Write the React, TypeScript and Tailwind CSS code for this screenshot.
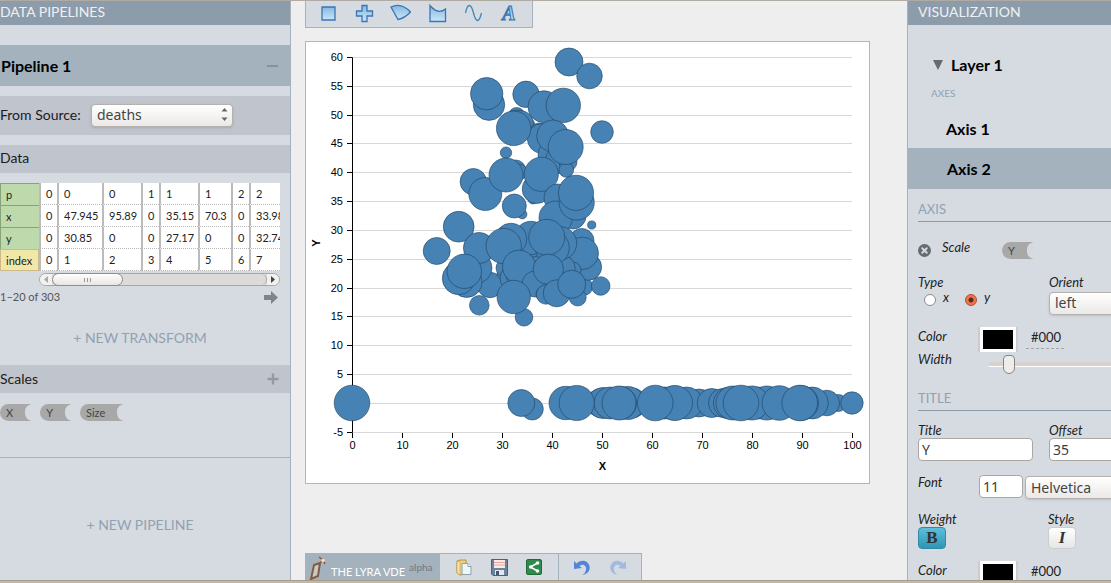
import React, { useState } from 'react';
import { X } from 'lucide-react';

type Point = [number, number, number];

const columns = [
  { width: 'w-[18px]', p: '0', x: '0', y: '0', index: '0' },
  { width: 'w-[45px]', p: '0', x: '47.945', y: '30.85', index: '1' },
  { width: 'w-[39px]', p: '0', x: '95.89', y: '0', index: '2' },
  { width: 'w-[18px]', p: '1', x: '0', y: '0', index: '3' },
  { width: 'w-[39px]', p: '1', x: '35.15', y: '27.17', index: '4' },
  { width: 'w-[33px]', p: '1', x: '70.3', y: '0', index: '5' },
  { width: 'w-[18px]', p: '2', x: '0', y: '0', index: '6' },
  { width: 'w-[45px]', p: '2', x: '33.985', y: '32.745', index: '7' },
];

const fields = ['p', 'x', 'y', 'index'] as const;

// cx, cy, r in drawing order
const points: Point[] = [
  [263, 20, 14], [283.5, 34, 12.8],
  [183, 62.7, 15.7], [180.7, 51.7, 16.2],
  [220, 52.3, 13.2], [210.7, 73.5, 8], [223, 82, 5.5], [211, 83, 15], [214, 82, 13.5],
  [233, 90, 9], [236.3, 96.5, 15], [238, 64.7, 16], [257.3, 63.4, 17.2],
  [207.7, 86.3, 17.3], [296, 90, 11.3], [247, 113, 15], [253, 118, 13.5], [262, 120, 9], [260.3, 128, 7.3],
  [246.7, 94, 16], [259.7, 105, 17.5], [200, 110.7, 5.7],
  [209.7, 128, 10], [213, 130, 8], [167.3, 139.7, 13.2], [179.3, 152, 16.5], [200, 133, 17],
  [227, 157, 5], [230.7, 147, 14.5], [235.3, 132.3, 17.1],
  [216.3, 172.3, 4.6], [208.3, 164, 12],
  [252, 156, 14], [267, 174, 13], [249.7, 175.7, 16.7], [270.7, 160.5, 17.6], [270, 150.8, 17.6],
  [285.7, 183, 4.1], [152.7, 184.7, 15.4], [130.7, 209, 13.5],
  [184, 243, 12.7], [170.7, 226, 15.3], [173, 206, 15.6], [160.7, 240, 15.4], [152.7, 236.3, 16.4], [158.3, 229.3, 17.2],
  [173.3, 263.3, 9.8],
  [196, 232, 5], [199, 226, 9], [207, 236, 13], [217, 232, 17], [224, 218, 6],
  [222, 209, 8], [223, 212, 5], [226, 214, 9],
  [225, 196, 16.7], [205, 197, 15.8], [197.7, 204, 17.7],
  [232, 228, 14], [213, 224.7, 16.5],
  [275.7, 198.7, 12.3], [278, 244.7, 8.7], [282.3, 225, 13.3], [276.3, 211.3, 16.2], [294.7, 244, 9.3],
  [267, 228, 8], [255.7, 226.3, 13.5],
  [254, 201.3, 16.7], [246.3, 205.7, 17], [240.7, 195.3, 18],
  [229, 242, 13], [242.3, 227.3, 15.2],
  [237, 252, 7], [240, 252.5, 9.7], [271.7, 255.5, 8.5],
  [250.7, 251.3, 13.5], [265.7, 242.3, 14],
  [218, 275.3, 8.8], [207.7, 255, 16.7],
  [226.3, 367, 11], [215.3, 361, 13.5],
  [259.7, 361, 16.7], [294, 361, 14], [297, 361, 15.5], [304, 361, 16], [326, 361, 15], [322, 361, 16.5],
  [314, 361, 16.5], [270.7, 361, 17.6], [313, 361, 17], [359, 361, 16], [393, 361, 14], [380.7, 361, 16],
  [368, 361, 17], [369, 361, 17.5], [349.3, 361, 17.8], [405.7, 361, 14.5], [417, 361, 14.5],
  [423.3, 361, 16], [427, 361, 17], [452, 361, 16], [460.7, 361, 17], [446, 361, 17],
  [435, 361, 17.8], [532.3, 361, 8.5], [520.7, 361, 12.8], [506.3, 361, 16],
  [495, 361, 17.5], [473.3, 361, 17.3], [493.7, 361, 17.8], [546, 361, 11.2], [46, 361, 17.8],
];

const yTicks = [60, 55, 50, 45, 40, 35, 30, 25, 20, 15, 10, 5, -5];
const gridLines = [...yTicks, 0];
const xTicks = [0, 10, 20, 30, 40, 50, 60, 70, 80, 90, 100];

const yPos = (v: number) => Math.round(361 - v * 5.77) + 0.5;
const xPos = (v: number) => 46.5 + v * 5;

const Chart: React.FC = () => (
  <svg width="563" height="441" viewBox="0 0 563 441" className="block" fontFamily='"Liberation Sans", Arial, sans-serif' fontSize="11">
    {gridLines.map((v) => (
      <line key={v} x1="47" x2="546" y1={yPos(v)} y2={yPos(v)} stroke="#d8d8d8" />
    ))}
    <path d={`M41 ${yPos(60)}H46.5V${yPos(-5)}H41`} fill="none" stroke="#000" />
    {yTicks.map((v) => (
      <g key={v}>
        <line x1="41" x2="46" y1={yPos(v)} y2={yPos(v)} stroke="#000" />
        <text x="37" y={yPos(v) + 3} textAnchor="end">{v}</text>
      </g>
    ))}
    {xTicks.map((v) => (
      <g key={v}>
        <line x1={xPos(v)} x2={xPos(v)} y1="391" y2="396" stroke="#000" />
        <text x={xPos(v)} y="407" textAnchor="middle">{v}</text>
      </g>
    ))}
    {points.map(([cx, cy, r], i) => (
      <circle key={i} cx={cx} cy={cy} r={r} fill="#4682b4" stroke="#1f425f" strokeWidth="0.6" />
    ))}
    <text x="296.5" y="428" textAnchor="middle" fontWeight="bold">X</text>
    <text transform="translate(14 201) rotate(-90)" textAnchor="middle" fontWeight="bold">Y</text>
  </svg>
);

const ScaleChip: React.FC<{ label: string }> = ({ label }) => (
  <button className="relative h-[17px] overflow-hidden rounded-l-full bg-[#a8a8a8] pl-[6px] pr-[18px] text-left text-[11px] leading-[17px] text-[#444]">
    {label}
    <span className="absolute -right-[9px] top-0 h-[17px] w-[15px] rounded-full bg-[#d6dbe2]" />
  </button>
);

const Arrows: React.FC = () => (
  <svg className="pointer-events-none absolute right-[5px] top-[6px]" width="7" height="13" viewBox="0 0 7 13">
    <path d="M0.5 3.5L3.5 0L6.5 3.5ZM0.5 9.5L3.5 13L6.5 9.5Z" fill="#666" />
  </svg>
);

const selectClass =
  'h-[23px] w-full appearance-none rounded border border-[#b5b1ac] bg-gradient-to-b from-white to-[#ebe9e7] pl-[5px] font-["Noto_Sans"] text-[14px] leading-[20px] text-[#444] shadow-sm';
const inputClass =
  'h-[23px] rounded border border-[#aaa6a2] bg-white pl-[3px] font-["Noto_Sans"] text-[14px] leading-[20px] text-[#3c3c3c]';
const labelClass = 'text-[13px] italic leading-[15px] text-[#222]';

const ColorRow: React.FC<{ id: string }> = ({ id }) => (
  <div className="grid h-[25px] grid-cols-[60px_50px_1fr]">
    <label htmlFor={id} className={`${labelClass} pt-[2px]`}>Color</label>
    <button id={id} aria-label="Color" className="h-[25px] w-[40px] border-x-2 border-[#ccc] bg-white px-[3px] py-[3px]">
      <span className="block h-full w-full bg-black" />
    </button>
    <span className="ml-[-2px] h-[22px] w-[38px] border-b border-dashed border-[#a0a6ae] pl-[5px] pt-[2px] text-[13px] leading-[16px] text-[#222]">#000</span>
  </div>
);

const DataPanel: React.FC = () => (
  <aside className="flex w-[291px] shrink-0 flex-col border-r border-[#a4b2be] bg-[#d6dbe2]">
    <h2 className="h-[24px] bg-[#8d9caa] text-[14px] leading-[22px] text-[#eef1f4]">DATA PIPELINES</h2>
    <div className="mt-5 flex h-[41px] items-center justify-between bg-[#a4b2be] pl-px pr-3">
      <h3 className="text-[16px] font-bold text-black">Pipeline 1</h3>
      <button aria-label="Collapse" className="h-[2px] w-[11px] bg-[#8492a0]" />
    </div>
    <div className="mt-[10px] flex h-[39px] items-center bg-[#c0c4cd] pb-[2px]">
      <label htmlFor="source" className="w-[91px] pb-px text-[14px] text-[#1b1b1b]">From Source:</label>
      <div className="relative w-[142px]">
        <select id="source" className={selectClass}>
          <option>deaths</option>
        </select>
        <Arrows />
      </div>
    </div>
    <h4 className="mt-[10px] h-[28px] bg-[#c0c4cd] text-[14px] leading-[26px] text-[#1b1b1b]">Data</h4>

    <div className="mr-[10px] mt-[10px] overflow-hidden">
      <table className="w-[294px] table-fixed border-separate border-spacing-0 text-[11px] leading-[15px] text-[#222]">
        <colgroup>
          <col className="w-[39px]" />
          {columns.map((c) => (
            <col key={c.index} className={c.width} />
          ))}
        </colgroup>
        <tbody>
          {fields.map((field) => (
            <tr key={field} className="h-[22px]">
              <th
                scope="row"
                className={
                  field === 'index'
                    ? 'border border-[#cdb98a] bg-[#f0e8a8] pl-[5px] text-left font-normal'
                    : 'border-l border-t border-[#85a578] bg-[#bedaac] pl-[5px] text-left font-normal'
                }
              >
                {field}
              </th>
              {columns.map((c) => (
                <td key={c.index} className="whitespace-nowrap border-b border-l-2 border-b-[#b8b8b8] border-l-[#bbb] bg-white pl-[5px] [border-bottom-style:dotted]">
                  {c[field]}
                </td>
              ))}
            </tr>
          ))}
        </tbody>
      </table>
    </div>
    <div className="ml-[39px] mr-[10px] mt-[2px] flex h-[13px] items-center rounded-full border border-[#aaa6a2] bg-[#dddbd9]">
      <button aria-label="Scroll left" className="flex h-full w-[12px] items-center justify-center rounded-l-full bg-[#f2f1f0]">
        <svg width="4" height="7" viewBox="0 0 4 7"><path d="M4 0V7L0 3.5Z" fill="#aaa" /></svg>
      </button>
      <div className="flex h-[13px] w-[71px] items-center justify-center gap-[2px] rounded-full border border-[#918d89] bg-gradient-to-b from-white to-[#e8e6e4]">
        <i className="h-[4px] w-px bg-[#999]" />
        <i className="h-[4px] w-px bg-[#999]" />
        <i className="h-[4px] w-px bg-[#999]" />
      </div>
      <div className="ml-auto h-full w-[8px] rounded-r-full border-r border-[#aaa6a2]" />
      <button aria-label="Scroll right" className="flex h-full w-[12px] items-center justify-center rounded-r-full bg-[#f2f1f0]">
        <svg width="4" height="7" viewBox="0 0 4 7"><path d="M0 0V7L4 3.5Z" fill="#444" /></svg>
      </button>
    </div>
    <div className="mt-1 flex h-[14px] items-center justify-between pr-3 text-[11px] text-[#555]">
      <span>1–20 of 303</span>
      <button aria-label="Next page">
        <svg width="14" height="13" viewBox="0 0 14 13"><path d="M0 4H7V0L14 6.5L7 13V9H0Z" fill="#808488" /></svg>
      </button>
    </div>
    <button className="mr-[10px] mt-6 h-5 text-[14px] leading-[20px] text-[#91a1b1]">+ NEW TRANSFORM</button>

    <div className="mt-[17px] flex h-[28px] items-center justify-between bg-[#c0c4cd] pr-[11px]">
      <h4 className="text-[14px] leading-[26px] text-[#1b1b1b]">Scales</h4>
      <button aria-label="Add scale">
        <svg width="12" height="12" viewBox="0 0 12 12"><path d="M6 0.5V11.5M0.5 6H11.5" stroke="#949aa3" strokeWidth="2.4" /></svg>
      </button>
    </div>
    <div className="mt-[11px] flex gap-[9px]">
      <ScaleChip label="X" />
      <ScaleChip label="Y" />
      <ScaleChip label="Size" />
    </div>
    <div className="mt-9 border-t border-[#a4b2be]" />
    <button className="mr-[10px] mt-[57px] h-5 text-[14px] leading-[20px] text-[#91a1b1]">+ NEW PIPELINE</button>
  </aside>
);

const markIcons = [
  { name: 'Rect', d: 'M4 4H17V17H4Z' },
  { name: 'Symbol', d: 'M8 2.5H13V8H18.5V13H13V18.5H8V13H2.5V8H8Z' },
  { name: 'Arc', d: 'M1 4Q11 -1 20.5 9Q15 15 8 16.5Z' },
  { name: 'Area', d: 'M3 2.5Q11 12 18.5 6V18.5H3Z' },
  { name: 'Line', d: 'M2.5 10C4.5 0 8 0 10.500 10S16 20 18.5 10' },
];

const MarkGradient: React.FC<{ id: string }> = ({ id }) => (
  <linearGradient id={id} x1="0" y1="0" x2="0" y2="1">
    <stop offset="0" stopColor="#85b8e2" />
    <stop offset="1" stopColor="#c9e6f7" />
  </linearGradient>
);

const MarkBar: React.FC = () => (
  <div className="flex h-[27px] w-[228px] items-center justify-between border border-t-0 border-[#a4b2be] bg-[#d6dbe2] px-[12px] pb-px">
    {markIcons.map((icon) => (
      <button key={icon.name} aria-label={icon.name}>
        <svg width="21" height="21" viewBox="0 0 21 21" className="block">
          <MarkGradient id={`fill-${icon.name}`} />
          <path
            d={icon.d}
            fill={icon.name === 'Line' ? 'none' : `url(#fill-${icon.name})`}
            stroke={icon.name === 'Line' ? '#3f88b4' : '#3c74b4'}
            strokeWidth="1.3"
          />
        </svg>
      </button>
    ))}
    <button aria-label="Text mark">
      <svg width="21" height="21" viewBox="0 0 21 21" className="block">
        <MarkGradient id="fill-Text" />
        <text x="10" y="17" textAnchor="middle" fontFamily='"Liberation Serif", serif' fontSize="20" fontWeight="bold" fontStyle="italic" fill="url(#fill-Text)" stroke="#3574b0" strokeWidth="1">A</text>
      </svg>
    </button>
  </div>
);

const BrandBar: React.FC = () => (
  <div className="mt-auto flex h-[27px] w-[337px] border border-b-0 border-[#a4b2be] bg-[#d6dbe2]">
    <div className="flex w-[134px] items-start bg-[#a4b2be] pl-[3px] pt-[2px] text-white">
      <svg width="18" height="24" viewBox="0 0 18 24" fill="none">
        <path d="M5 9L11 7L9 20L2 23Z" fill="#c7cac6" stroke="#855b43" strokeWidth="2" />
        <path d="M10 8L14 4L10 1M14 4L16 8" stroke="#855b43" strokeWidth="1.5" />
        <circle cx="14" cy="4.5" r="1.8" fill="#fbdcb5" />
      </svg>
      <span className="ml-1 pt-[8px] text-[11px] leading-[16px]">THE LYRA VDE</span>
      <span className="ml-1 pt-[4px] text-[10px] leading-[14px] text-[#707880]">alpha</span>
    </div>
    <div className="flex w-[118px] items-center justify-between px-4">
      <button aria-label="Open">
        <svg width="16" height="17" viewBox="0 0 16 17">
          <path d="M1 2L4 1H10V15L4 16L1 14Z" fill="#eed184" stroke="#b79345" />
          <path d="M1 2L4 3V16L1 14Z" fill="#f6e3a6" stroke="#b79345" strokeWidth="0.5" />
          <path d="M6 4.5H12L15 7.5V15.5H6Z" fill="#eef6f8" stroke="#8ba3ad" />
          <path d="M12 4.5V7.5H15" fill="#fff" stroke="#8ba3ad" />
        </svg>
      </button>
      <button aria-label="Save">
        <svg width="17" height="17" viewBox="0 0 17 17">
          <path d="M0.5 0.5H16.5V16.5H2L0.5 15Z" fill="#6c83a0" stroke="#4a607c" />
          <path d="M3 1H14V9H3Z" fill="#fbe9e4" />
          <path d="M3 3.5H14M3 6H14" stroke="#e2a79d" />
          <path d="M4 11H13V16H4Z" fill="#e4e8ee" />
          <path d="M5 12H8V16H5Z" fill="#445971" />
        </svg>
      </button>
      <button aria-label="Share">
        <svg width="16" height="16" viewBox="0 0 16 16">
          <rect x="0.5" y="0.5" width="15" height="15" rx="1.5" fill="#2f8a4d" stroke="#1f6b38" />
          <path d="M11.5 4L4.5 8L11.5 12" fill="none" stroke="#fff" strokeWidth="1.5" />
          <g fill="#fff"><circle cx="11.5" cy="4" r="1.8" /><circle cx="4.7" cy="8" r="1.8" /><circle cx="11.5" cy="12" r="1.8" /></g>
        </svg>
      </button>
    </div>
    <div className="flex flex-1 items-center justify-between border-l border-[#a4b2be] px-[14px]">
      <button aria-label="Undo">
        <svg width="18" height="17" viewBox="0 0 18 17">
          <path d="M1 2L1 10L9 9L6.5 7C10 4 14 7 13 11Q12.5 14 9.5 16C15 15 17.5 11 16.5 7C15 1.5 8 0 3.5 4.5Z" fill="#5484d8" />
        </svg>
      </button>
      <button aria-label="Redo">
        <svg width="18" height="17" viewBox="0 0 18 17">
          <path d="M17 2L17 10L9 9L11.5 7C8 4 4 7 5 11Q5.5 14 8.5 16C3 15 0.5 11 1.5 7C3 1.5 10 0 14.5 4.5Z" fill="#a3b9df" />
        </svg>
      </button>
    </div>
  </div>
);

const VisualizationPanel: React.FC = () => {
  const [type, setType] = useState('y');
  const [lineWidth, setLineWidth] = useState(10);
  const radioClass =
    'h-[12px] w-[12px] appearance-none rounded-full border border-[#8d8d8d] bg-white checked:border-[#b04a26] checked:bg-[radial-gradient(circle,#5b2a18_0_2px,#f0764a_3px)]';

  return (
    <aside className="w-[204px] shrink-0 overflow-hidden border-l border-[#a4b2be] bg-[#d6dbe2]">
      <h2 className="h-[24px] bg-[#8d9caa] pl-[10px] text-[14px] leading-[22px] text-[#eef1f4]">VISUALIZATION</h2>
      <div className="mt-[30px] flex h-5 items-center pl-[25px]">
        <svg width="10" height="10" viewBox="0 0 10 10"><path d="M0 0H10L5 10Z" fill="#666b6e" /></svg>
        <h3 className="ml-2 text-[16px] font-bold leading-[20px] text-black">Layer 1</h3>
      </div>
      <p className="mt-[10px] pl-[23px] text-[10px] leading-[16px] text-[#91a1b1]">AXES</p>
      <h3 className="mt-[18px] pl-[38px] text-[16px] font-bold leading-[20px] text-black">Axis 1</h3>
      <h3 className="mt-[9px] h-[41px] bg-[#a4b2be] pl-[39px] text-[16px] font-bold leading-[42px] text-black">Axis 2</h3>

      <div className="w-[245px] pl-[10px]">
        <h4 className="mt-3 h-[21px] border-b border-[#8d9caa] text-[13px] leading-[17px] text-[#91a1b1]">AXIS</h4>
        <div className="mt-5 flex h-[17px] items-center">
          <button aria-label="Remove scale" className="flex h-[13px] w-[13px] items-center justify-center rounded-full bg-[#666b6f] text-[#d6dbe2]">
            <X size={9} strokeWidth={5} />
          </button>
          <span className={`${labelClass} ml-[11px] w-[60px] pb-[6px]`}>Scale</span>
          <ScaleChip label="Y" />
        </div>
        <div className="mt-4 grid grid-cols-[131px_1fr]">
          <fieldset>
            <legend className={labelClass}>Type</legend>
            <div className="flex items-center pl-[6px]">
              {['x', 'y'].map((t) => (
                <label key={t} className={`${labelClass} flex w-[41px] items-center`}>
                  <input type="radio" name="type" checked={type === t} onChange={() => setType(t)} className={radioClass} />
                  <span className="pb-[5px] pl-[7px]">{t}</span>
                </label>
              ))}
            </div>
          </fieldset>
          <div>
            <label htmlFor="orient" className={`${labelClass} block`}>Orient</label>
            <select id="orient" className={selectClass}>
              <option>left</option>
            </select>
          </div>
        </div>
        <div className="mt-3">
          <ColorRow id="axis-color" />
        </div>
        <div className="grid grid-cols-[70px_1fr] items-start">
          <label htmlFor="width" className={labelClass}>Width</label>
          <input
            id="width"
            type="range"
            value={lineWidth}
            onChange={(e) => setLineWidth(Number(e.target.value))}
            className="mt-[3px] h-[19px] w-full appearance-none bg-transparent [&::-webkit-slider-runnable-track]:h-[5px] [&::-webkit-slider-runnable-track]:rounded-full [&::-webkit-slider-runnable-track]:border-b [&::-webkit-slider-runnable-track]:border-white [&::-webkit-slider-runnable-track]:bg-[#d8d2cf] [&::-webkit-slider-thumb]:-mt-[7px] [&::-webkit-slider-thumb]:h-[19px] [&::-webkit-slider-thumb]:w-[12px] [&::-webkit-slider-thumb]:appearance-none [&::-webkit-slider-thumb]:rounded-t [&::-webkit-slider-thumb]:rounded-b-[6px] [&::-webkit-slider-thumb]:border [&::-webkit-slider-thumb]:border-[#88847f] [&::-webkit-slider-thumb]:bg-[#efedeb]"
          />
        </div>

        <h4 className="mt-4 h-[21px] border-b border-[#8d9caa] text-[13px] leading-[16px] text-[#91a1b1]">TITLE</h4>
        <div className="mt-3 grid grid-cols-[131px_1fr]">
          <div>
            <label htmlFor="title" className={`${labelClass} block`}>Title</label>
            <input id="title" defaultValue="Y" className={`${inputClass} block w-[115px]`} />
          </div>
          <div>
            <label htmlFor="offset" className={`${labelClass} block`}>Offset</label>
            <input id="offset" defaultValue="35" className={`${inputClass} block w-full`} />
          </div>
        </div>
        <div className="mt-[14px] flex h-[23px]">
          <label htmlFor="font-size" className={`${labelClass} w-[61px]`}>Font</label>
          <input id="font-size" defaultValue="11" className={`${inputClass} w-[44px]`} />
          <div className="ml-[2px] flex-1">
            <select aria-label="Font family" className={selectClass}>
              <option>Helvetica</option>
            </select>
          </div>
        </div>
        <div className="mt-[14px] grid grid-cols-[130px_1fr]">
          <div>
            <label htmlFor="bold" className={`${labelClass} block`}>Weight</label>
            <button id="bold" className="block h-[22px] w-[28px] rounded-sm border border-[#2b8ba8] bg-gradient-to-b from-[#5cbfdb] to-[#2f96b4] font-['Liberation_Serif'] text-[17px] font-bold leading-[18px] text-[#333]">B</button>
          </div>
          <div>
            <label htmlFor="italic" className={`${labelClass} block`}>Style</label>
            <button id="italic" className="block h-[22px] w-[28px] rounded-sm border border-[#ccc] bg-gradient-to-b from-white to-[#e6e6e6] font-['Liberation_Serif'] text-[17px] font-bold italic leading-[18px] text-[#333]">I</button>
          </div>
        </div>
        <div className="mt-3">
          <ColorRow id="title-color" />
        </div>
      </div>
    </aside>
  );
};

const App: React.FC = () => (
  <div className="flex h-screen flex-col overflow-hidden border-t border-[#b0aaa5] bg-[#eee] font-[Lato,sans-serif]">
    <div className="flex min-h-0 flex-1 overflow-hidden">
      <DataPanel />
      <main className="flex min-w-0 flex-1 flex-col items-start pl-[14px]">
        <MarkBar />
        <div className="mt-[13px] border border-[#b5b5b5] bg-white">
          <Chart />
        </div>
        <BrandBar />
      </main>
      <VisualizationPanel />
    </div>
    <div className="h-[3px] shrink-0 border-t border-[#a59e92] bg-[#c6b8a0]" />
  </div>
);

export default App;
